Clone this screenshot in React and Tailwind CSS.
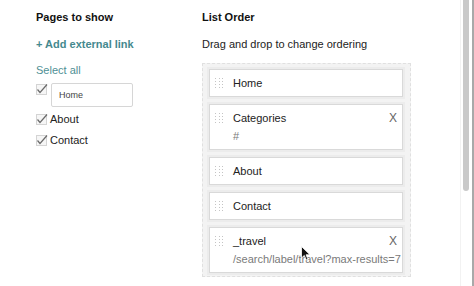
import React from "react";

const items = [
  { title: "Home" },
  { title: "Categories", sub: "#", removable: true },
  { title: "About" },
  { title: "Contact" },
  { title: "_travel", sub: "/search/label/travel?max-results=7", removable: true },
];

function Check() {
  return (
    <svg width="12" height="12" viewBox="0 0 12 12" className="shrink-0">
      <rect x="0.5" y="1.5" width="10" height="10" fill="#f6f6f6" stroke="#d4d4d4" />
      <path d="M1.5 6.5 L4 9.5 L11 1.5" fill="none" stroke="#6a6a6a" strokeWidth="1.2" />
    </svg>
  );
}

function Handle() {
  return (
    <div className="grid grid-cols-3 grid-rows-4 gap-[2px] w-[9px] h-[10px] mt-[4px] self-start shrink-0">
      {Array.from({ length: 12 }).map((_, i) => (
        <span key={i} className="block w-[1px] h-[1px] bg-[#c4c4c4]" />
      ))}
    </div>
  );
}

function ListItem({ item }) {
  return (
    <div className="flex items-start bg-white border border-[#d9d9d9] shadow-[0_0_0_2px_#ececec] pl-[5px] pr-[5px] py-[4px] leading-[18px]">
      <Handle />
      <div className="ml-[9px] flex-1 min-w-0 whitespace-nowrap">
        <div className="text-[#222]">{item.title}</div>
        {item.sub && <div className="text-[#7a7a7a]">{item.sub}</div>}
      </div>
      {item.removable && <span className="text-[#666] text-[12px] shrink-0">X</span>}
    </div>
  );
}

export default function App() {
  return (
    <div
      className="relative w-[474px] h-[286px] overflow-hidden bg-white flex text-[11px]"
      style={{ fontFamily: '"Liberation Sans", Arial, sans-serif' }}
    >
      <div className="w-[202px] pl-[36px] pt-[10px] shrink-0 leading-[14px]">
        <div className="font-bold text-[#111]">Pages to show</div>
        <div className="font-bold text-[#45898e] mt-[13px]">+ Add external link</div>
        <div className="text-[#4f9095] mt-[12px]">Select all</div>
        <div className="flex items-start mt-[6px] gap-[3px]">
          <Check />
          <div className="w-[82px] h-[24px] border border-[#d6d6d6] rounded-[2px] flex items-center pl-[7px] text-[9px] text-[#444]">
            Home
          </div>
        </div>
        <div className="flex items-center mt-[5px] gap-[2px] text-[#222]">
          <Check />
          <span>About</span>
        </div>
        <div className="flex items-center mt-[7px] gap-[2px] text-[#222]">
          <Check />
          <span>Contact</span>
        </div>
      </div>

      <div className="w-[209px] pt-[10px] shrink-0 leading-[14px]">
        <div className="font-bold text-[#111]">List Order</div>
        <div className="text-[#222] mt-[13px]">Drag and drop to change ordering</div>
        <div className="mt-[12px] h-[214px] bg-[#f3f3f3] border border-dashed border-[#e0e0e0] pl-[6px] pr-[7px] pt-[5px] flex flex-col gap-[7px]">
          {items.map((it) => (
            <ListItem key={it.title} item={it} />
          ))}
        </div>
      </div>

      <div className="flex-1" />
      <div className="w-[12px] shrink-0 border-l border-[#f2f2f2] pl-[2px]">
        <div className="w-[6px] h-[191px] bg-[#c9c9c9] rounded-b-[3px]" />
      </div>
      <div className="w-[2px] shrink-0 bg-[#a9a9a9]" />

      <svg className="absolute left-[301px] top-[246px]" width="11" height="15" viewBox="0 0 11 15">
        <path d="M0.5 0.5 L0.5 12 L3.3 9.4 L5.3 14 L7 13.3 L5 8.8 L9 8.8 Z" fill="#111" stroke="#fff" strokeWidth="0.8" />
      </svg>
    </div>
  );
}
